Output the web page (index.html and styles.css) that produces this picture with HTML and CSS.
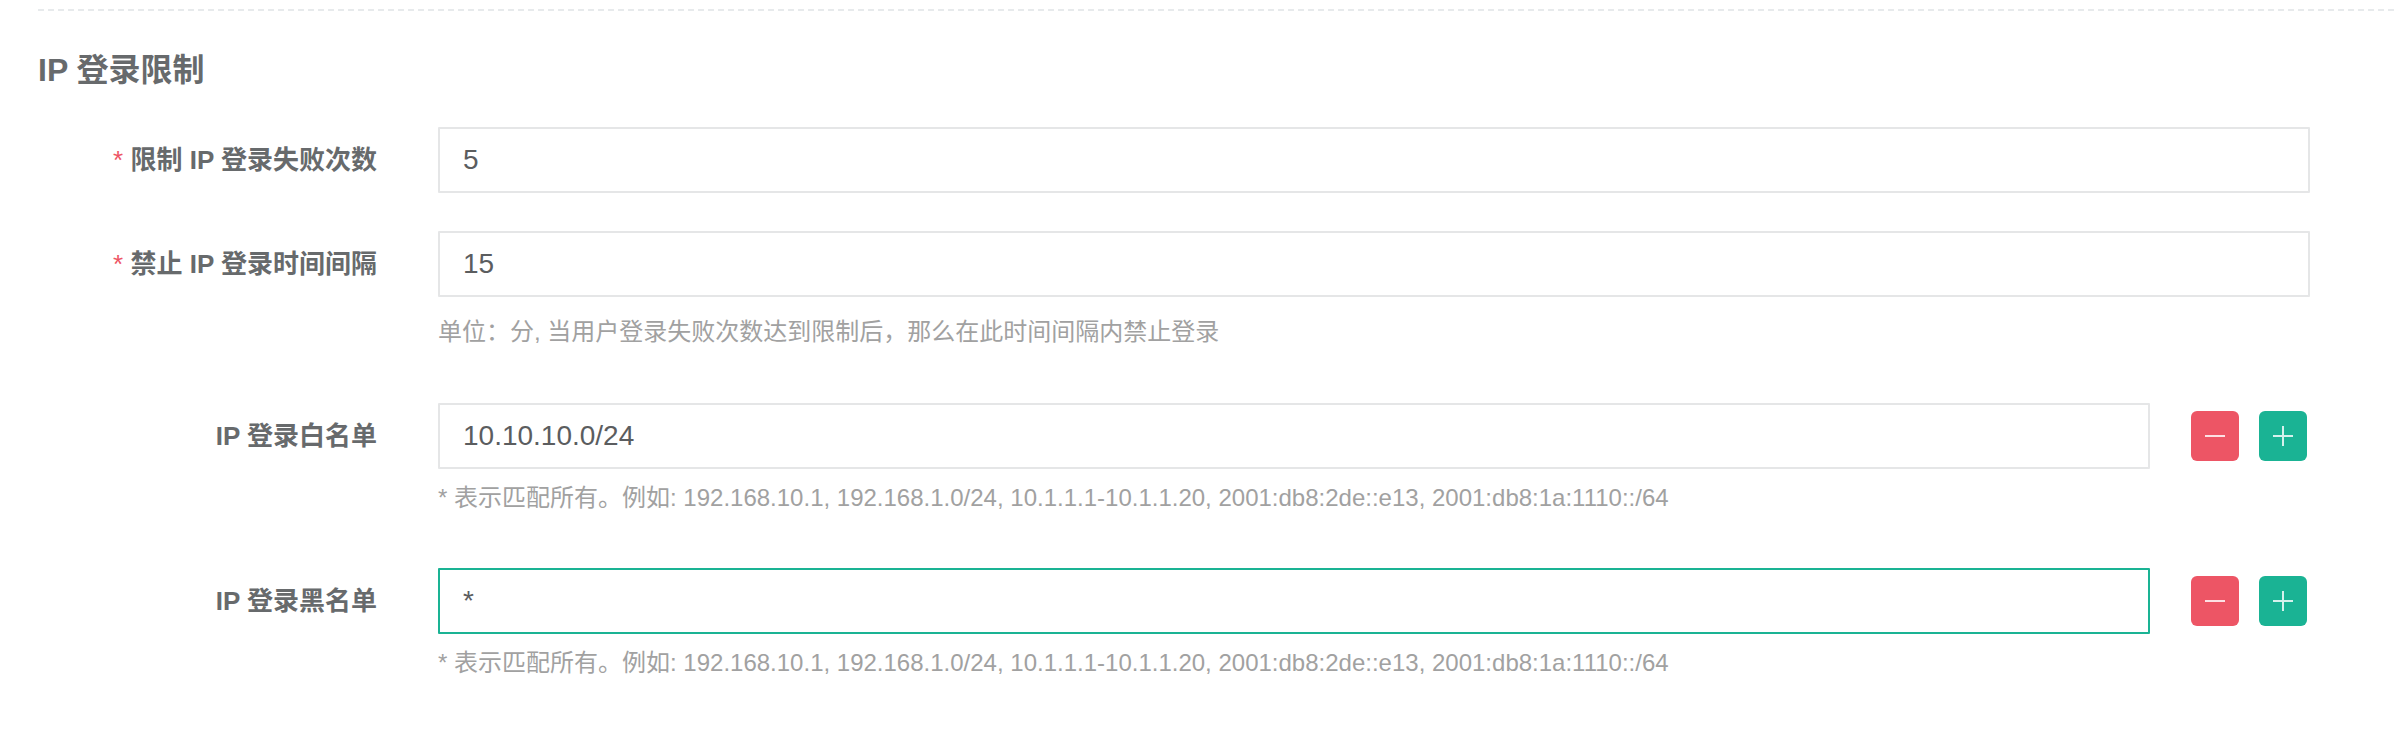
FILE: index.html
```html
<!DOCTYPE html>
<html lang="zh-CN">
<head>
<meta charset="utf-8">
<title>IP 登录限制</title>
<link rel="stylesheet" href="styles.css">
</head>
<body>
<div class="page">
  <div class="dash"></div>
  <h3 class="title">IP 登录限制</h3>
  <div class="form">
    <div class="row row-first">
      <label class="label"><span class="req">*</span> 限制 IP 登录失败次数</label>
      <div class="field">
        <div class="control-line">
          <input class="control" type="text" value="5">
        </div>
      </div>
    </div>
    <div class="row row-second">
      <label class="label"><span class="req">*</span> 禁止 IP 登录时间间隔</label>
      <div class="field">
        <div class="control-line">
          <input class="control" type="text" value="15">
        </div>
        <div class="help help-wide">单位：分, 当用户登录失败次数达到限制后，那么在此时间间隔内禁止登录</div>
      </div>
    </div>
    <div class="row row-list">
      <label class="label">IP 登录白名单</label>
      <div class="field">
        <div class="control-line">
          <input class="control" type="text" value="10.10.10.0/24">
          <div class="btns">
            <button class="btn btn-danger" type="button"><svg width="20" height="20" viewBox="0 0 20 20"><path d="M0 10H20" stroke="currentColor" stroke-width="2"/></svg></button>
            <button class="btn btn-primary" type="button"><svg width="20" height="20" viewBox="0 0 20 20"><path d="M10 0V20M0 10H20" stroke="currentColor" stroke-width="2"/></svg></button>
          </div>
        </div>
        <div class="help">* 表示匹配所有。例如: 192.168.10.1, 192.168.1.0/24, 10.1.1.1-10.1.1.20, 2001:db8:2de::e13, 2001:db8:1a:1110::/64</div>
      </div>
    </div>
    <div class="row row-list row-last">
      <label class="label">IP 登录黑名单</label>
      <div class="field">
        <div class="control-line">
          <input class="control control-focus" type="text" value="*">
          <div class="btns">
            <button class="btn btn-danger" type="button"><svg width="20" height="20" viewBox="0 0 20 20"><path d="M0 10H20" stroke="currentColor" stroke-width="2"/></svg></button>
            <button class="btn btn-primary" type="button"><svg width="20" height="20" viewBox="0 0 20 20"><path d="M10 0V20M0 10H20" stroke="currentColor" stroke-width="2"/></svg></button>
          </div>
        </div>
        <div class="help">* 表示匹配所有。例如: 192.168.10.1, 192.168.1.0/24, 10.1.1.1-10.1.1.20, 2001:db8:2de::e13, 2001:db8:1a:1110::/64</div>
      </div>
    </div>
  </div>
</div>
</body>
</html>
```
FILE: styles.css
```css
html, body {
  margin: 0;
  padding: 0;
  background: #ffffff;
}

body {
  font-family: "Liberation Sans", "Noto Sans CJK SC", sans-serif;
  color: #676a6c;
}

.page {
  padding-left: 38px;
}

.dash {
  margin-top: 9px;
  border-top: 2px dashed #e7eaec;
}

.title {
  margin: 37px 0 0;
  font-size: 32px;
  line-height: 44px;
  font-weight: bold;
  color: #676a6c;
}

.form {
  margin-top: 35px;
  width: 2272px;
}

.row {
  display: grid;
  grid-template-columns: 339px 1fr;
  column-gap: 61px;
  align-items: start;
}

.row-first {
  margin-bottom: 38px;
}

.row-second {
  margin-bottom: 54px;
}

.row-list {
  margin-bottom: 53px;
}

.row-last {
  margin-bottom: 0;
}

.label {
  text-align: right;
  font-size: 26px;
  line-height: 66px;
  font-weight: bold;
  color: #676a6c;
  white-space: nowrap;
}

.req {
  color: #ed5565;
  font-weight: normal;
}

.field {
  display: flex;
  flex-direction: column;
}

.control-line {
  display: flex;
  align-items: center;
}

.control {
  flex: 1;
  min-width: 0;
  height: 66px;
  box-sizing: border-box;
  margin: 0;
  padding: 0 23px;
  border: 2px solid #e5e6e7;
  border-radius: 1px;
  background: #ffffff;
  font-family: "Liberation Sans", "Noto Sans CJK SC", sans-serif;
  font-size: 28px;
  color: #5b5d5f;
  outline: none;
}

.control-focus {
  border-color: #1ab394;
}

.btns {
  display: flex;
  gap: 20px;
  margin-left: 41px;
  margin-right: 3px;
}

.btn {
  width: 48px;
  height: 50px;
  padding: 0;
  border: none;
  border-radius: 6px;
  display: flex;
  align-items: center;
  justify-content: center;
  color: rgba(255, 255, 255, 0.82);
  cursor: pointer;
}

.btn svg {
  display: block;
}

.btn-danger {
  background: #ed5565;
}

.btn-primary {
  background: #1ab394;
}

.help {
  margin-top: 12px;
  font-size: 24px;
  line-height: 34px;
  color: #a1a1a1;
  white-space: nowrap;
}

.help-wide {
  margin-top: 18px;
}
```
